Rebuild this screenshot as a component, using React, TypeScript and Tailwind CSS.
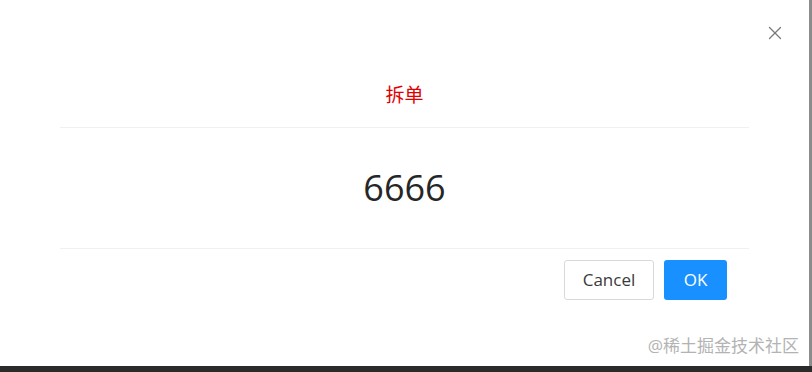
import { X } from 'lucide-react'

const font = { fontFamily: '"Open Sans", "Noto Sans CJK SC", sans-serif' }

export default function App() {
  return (
    <div className="flex h-[372px] w-[812px] flex-col overflow-hidden bg-white" style={font}>
      <div className="flex flex-1">
        <div className="relative flex-1 bg-white">
          <button className="absolute right-[23px] top-[22px] text-[#7a7a7a]">
            <X className="h-[22px] w-[22px]" strokeWidth={1.4} />
          </button>

          <div className="mx-[60px] flex flex-col">
            <div className="pt-[81px] pb-[18px] text-center text-[19px] leading-[28px] text-[#e00000]">
              拆单
            </div>
            <div className="h-px bg-[#f0f0f0]" />
            <div className="py-[40px] text-center text-[36px] leading-[40px] text-[#262626]">6666</div>
            <div className="h-px bg-[#f0f0f0]" />
            <div className="flex justify-end gap-[10px] pt-[11px] pr-[22px]">
              <button className="h-[40px] w-[90px] rounded-[3px] border border-[#d9d9d9] bg-white text-[17px] text-[#3a3a3a]">
                Cancel
              </button>
              <button className="h-[40px] w-[63px] rounded-[3px] bg-[#1890ff] text-[17px] text-white">
                OK
              </button>
            </div>
          </div>

          <div className="absolute bottom-[8px] right-[10px] text-[17px] leading-[24px] text-[#b3b3b3]">
            @稀土掘金技术社区
          </div>
        </div>
        <div className="w-[3px] bg-[#8c8c8c]" />
      </div>
      <div className="h-[6px] bg-[#2b2b2b]" />
    </div>
  )
}
